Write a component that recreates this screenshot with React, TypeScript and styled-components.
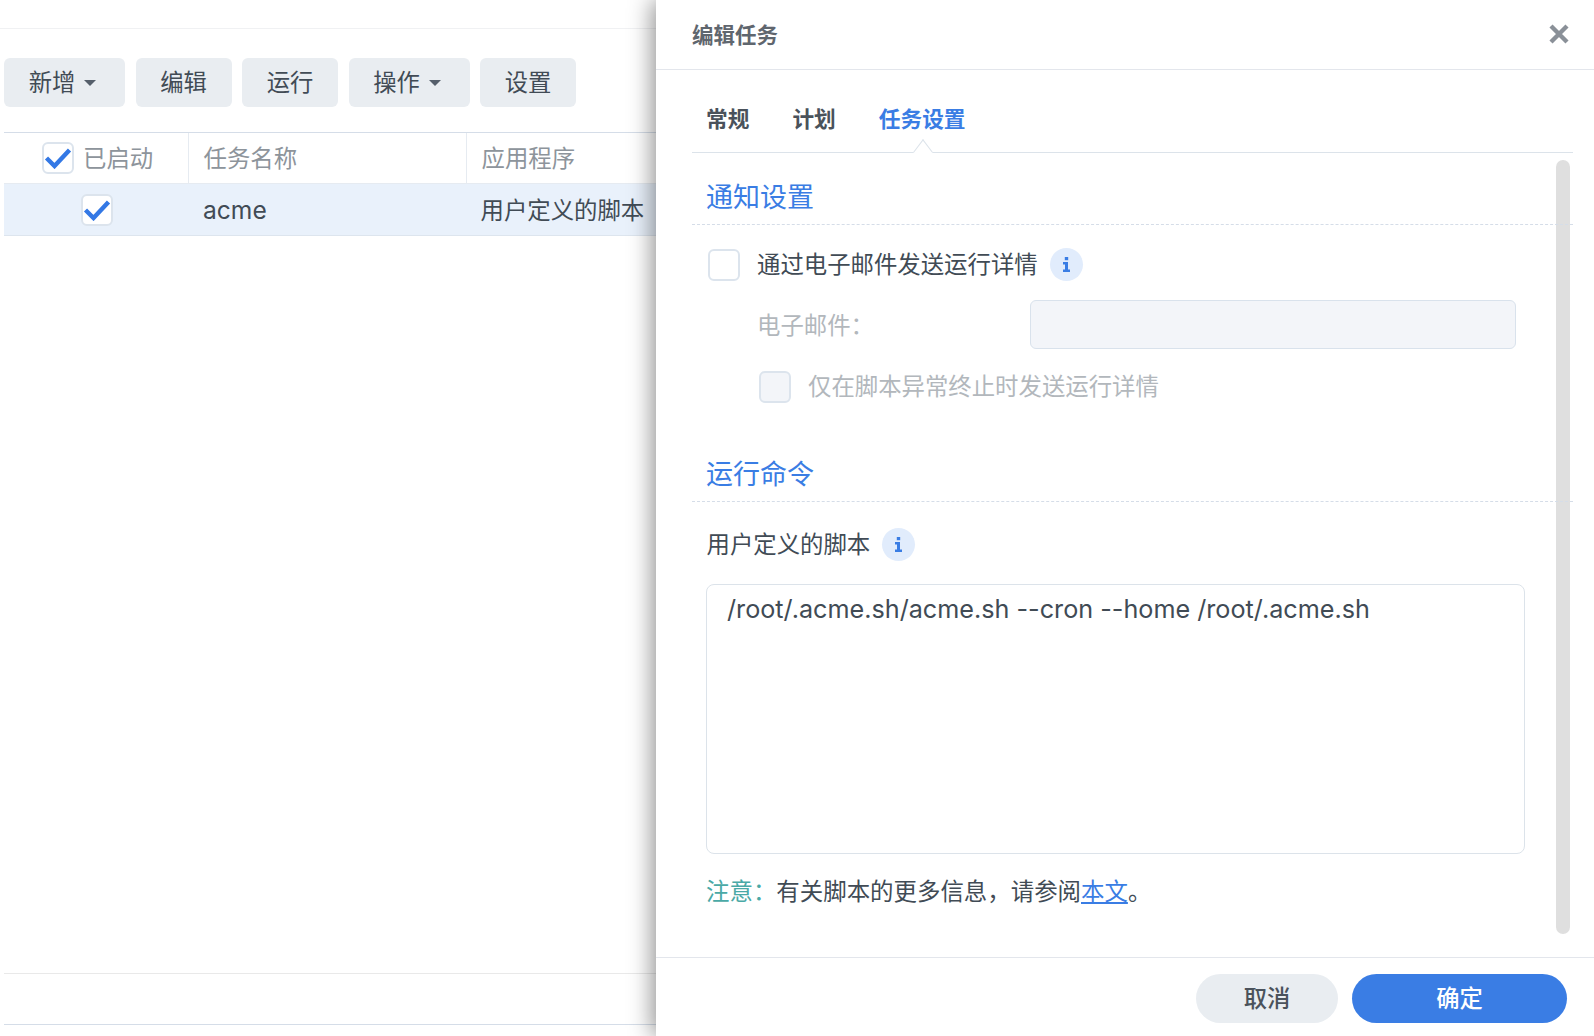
import React from "react";
import styled, { createGlobalStyle } from "styled-components";

const FONT = `"Inter", "Noto Sans CJK SC", sans-serif`;

const Global = createGlobalStyle`
  html, body { margin: 0; padding: 0; background: #fff; }
  body { font-family: ${FONT}; color: #414b55; }
  * { box-sizing: border-box; }
`;

const Page = styled.div`
  position: relative;
  width: 1594px;
  height: 1036px;
  overflow: hidden;
  padding-left: 4px;
  display: flex;
  flex-direction: column;
  background: #fff;
`;
const TopBar = styled.div`
  height: 29px;
  flex: none;
  border-bottom: 1px solid #f0f1f3;
  margin-left: -4px;
`;
const Toolbar = styled.div`
  display: flex;
  gap: 10.5px;
  margin-top: 29px;
  flex: none;
`;
const ToolButton = styled.button<{ $w: number; $menu?: boolean }>`
  width: ${(p) => p.$w}px;
  height: 49px;
  border: 0;
  border-radius: 6px;
  background: #e9edf1;
  color: #414b55;
  font: 400 23.3px/49px ${FONT};
  padding: 0 ${(p) => (p.$menu ? 4 : 0)}px 0 0;
  display: flex;
  align-items: center;
  justify-content: center;
  gap: 9px;
`;
const Caret = styled.i`
  width: 0;
  height: 0;
  border-left: 6px solid transparent;
  border-right: 6px solid transparent;
  border-top: 6px solid #555f6b;
  margin-top: 1px;
`;
const Table = styled.div`
  margin-top: 25px;
  flex: none;
  border-top: 1px solid #d5dde8;
`;
const Row = styled.div<{ $selected?: boolean }>`
  display: grid;
  grid-template-columns: 184px 277.5px 1fr;
  height: ${(p) => (p.$selected ? 52 : 51)}px;
  border-bottom: 1px solid ${(p) => (p.$selected ? "#dde5ee" : "#e6ebf1")};
  background: ${(p) => (p.$selected ? "#e9f1fb" : "#fff")};
`;
const Cell = styled.div<{ $head?: boolean; $sep?: boolean; $pad?: number }>`
  display: flex;
  align-items: center;
  gap: 9px;
  padding-left: ${(p) => p.$pad ?? 15}px;
  font-size: 23.4px;
  white-space: nowrap;
  color: ${(p) => (p.$head ? "#8d949b" : "#414b55")};
  border-left: ${(p) => (p.$sep ? "1px solid #e6ebf1" : "0")};
`;
const CellText = styled.span`
  margin-top: -2px;
`;
const TaskName = styled.span`
  font-size: 24.6px;
`;
const Pager = styled.div`
  margin-top: auto;
  margin-bottom: 11px;
  height: 52px;
  flex: none;
  border-top: 1px solid #e9e9e9;
  border-bottom: 1px solid #d5dde8;
`;

const Drawer = styled.aside`
  position: absolute;
  left: 656px;
  top: 0;
  right: 0;
  bottom: 0;
  background: #fff;
  display: flex;
  flex-direction: column;
  box-shadow: -4px 0 22px rgba(0, 0, 0, 0.42);
`;
const DrawerHead = styled.header`
  height: 70px;
  flex: none;
  display: flex;
  align-items: center;
  justify-content: space-between;
  padding: 0 25px 2px 36px;
  border-bottom: 1px solid #e3e6ec;
  font-size: 21.5px;
  font-weight: 700;
  color: #5f666e;
`;
const Tabs = styled.nav`
  margin: 0 21px 0 36px;
  height: 83px;
  flex: none;
  position: relative;
  display: flex;
  align-items: center;
  gap: 43px;
  padding: 16px 0 0 14px;
  border-bottom: 1px solid #dce3ea;
`;
const Tab = styled.span<{ $active?: boolean }>`
  font-size: 21.7px;
  font-weight: 700;
  line-height: 30px;
  color: ${(p) => (p.$active ? "#3a7de4" : "#4a525b")};
`;
const TabArrow = styled.i`
  position: absolute;
  left: 222.5px;
  bottom: -8px;
  width: 16px;
  height: 16px;
  background: #fff;
  border-top: 1px solid #dce3ea;
  border-left: 1px solid #dce3ea;
  transform: rotate(45deg) skew(8deg, 8deg);
`;
const Body = styled.div`
  flex: 1;
  display: flex;
  flex-direction: column;
  position: relative;
`;
const SectionTitle = styled.h2<{ $top: number }>`
  margin: ${(p) => p.$top}px 21px 0 36px;
  padding: 0 0 8px 14px;
  border-bottom: 1px dashed #d5dde8;
  font-size: 27px;
  font-weight: 400;
  line-height: 36px;
  color: #3a7de4;
  flex: none;
`;
const CheckRow = styled.label<{ $top: number; $indent: number; $gap: number }>`
  display: flex;
  align-items: center;
  gap: ${(p) => p.$gap}px;
  margin: ${(p) => p.$top}px 0 0 ${(p) => p.$indent}px;
  height: 33px;
  font-size: 23.4px;
  white-space: nowrap;
  flex: none;
`;
const RowText = styled.span<{ $muted?: boolean; $offset?: number }>`
  margin: -3px 0 0 ${(p) => p.$offset ?? 5}px;
  color: ${(p) => (p.$muted ? "#b2b7bc" : "inherit")};
`;
const Box = styled.span<{ $disabled?: boolean }>`
  width: 32px;
  height: 32px;
  flex: none;
  position: relative;
  display: block;
  border: 2px solid #dce4ed;
  border-radius: 6px;
  background: ${(p) => (p.$disabled ? "#f3f5f9" : "#fff")};
`;
const CheckMark = styled.svg`
  position: absolute;
  left: 0;
  top: 3px;
  width: 28px;
  height: 22px;
`;
const EmailLabel = styled.span`
  color: #b2b7bc;
  margin-top: -2px;
`;
const InfoDot = styled.span`
  width: 33px;
  height: 33px;
  flex: none;
  border-radius: 50%;
  background: #e1ecfc;
  display: flex;
  align-items: center;
  justify-content: center;
`;
const EmailRow = styled.div`
  display: grid;
  grid-template-columns: 273px 486px;
  align-items: center;
  margin: 19px 0 0 101px;
  height: 49px;
  font-size: 23.4px;
  flex: none;
`;
const EmailInput = styled.input`
  width: 100%;
  height: 49px;
  border: 1px solid #d9e2ec;
  border-radius: 6px;
  background: #f3f5f9;
`;
const Script = styled.textarea`
  display: block;
  flex: none;
  width: 819px;
  height: 270px;
  margin: 23px 0 0 50px;
  padding: 6px 20px;
  border: 1px solid #dce3ea;
  border-radius: 8px;
  resize: none;
  outline: none;
  overflow: hidden;
  font: 400 25.2px/36px ${FONT};
  color: #414b55;
`;
const Note = styled.p`
  margin: 20px 0 0 50px;
  font-size: 23.45px;
  line-height: 36px;
  white-space: nowrap;
  flex: none;
`;
const NoteTag = styled.span`
  color: #4aa9a6;
`;
const NoteLink = styled.a`
  color: #3a7de4;
  text-decoration: underline;
`;
const Scrollbar = styled.i`
  position: absolute;
  left: 900px;
  top: 160px;
  width: 14px;
  height: 774px;
  border-radius: 7px;
  background: #dfdfdf;
`;
const DrawerFoot = styled.footer`
  flex: none;
  height: 79px;
  display: flex;
  justify-content: flex-end;
  gap: 14px;
  padding: 16px 27px 0 0;
  border-top: 1px solid #e3e6ec;
`;
const FootButton = styled.button<{ $primary?: boolean; $w: number }>`
  width: ${(p) => p.$w}px;
  height: 49px;
  border: 0;
  border-radius: 25px;
  padding: 0;
  background: ${(p) => (p.$primary ? "#3a7de4" : "#e9edf1")};
  color: ${(p) => (p.$primary ? "#fff" : "#4a525b")};
  font: 500 23.3px/49px ${FONT};
`;

const Check = () => (
  <CheckMark viewBox="0 0 28 22">
    <path d="M2.5 11 L10.5 19 L25.5 3" fill="none" stroke="#3378e5" strokeWidth="4.4" />
  </CheckMark>
);

const Info = () => (
  <InfoDot>
    <svg width="9" height="15" viewBox="0 0 9 15">
      <rect x="2.8" y="0" width="3.4" height="3.2" fill="#3a7de4" />
      <path d="M1 5h5v7.6h2V15H1v-2.4h2V7.4H1z" fill="#3a7de4" />
    </svg>
  </InfoDot>
);

export default function App() {
  return (
    <>
      <Global />
      <Page>
        <TopBar />
        <Toolbar>
          <ToolButton $w={121} $menu>新增<Caret /></ToolButton>
          <ToolButton $w={96}>编辑</ToolButton>
          <ToolButton $w={96}>运行</ToolButton>
          <ToolButton $w={121} $menu>操作<Caret /></ToolButton>
          <ToolButton $w={96}>设置</ToolButton>
        </Toolbar>
        <Table>
          <Row>
            <Cell $head $pad={38}><Box><Check /></Box><CellText>已启动</CellText></Cell>
            <Cell $head $sep $pad={14.5}><CellText>任务名称</CellText></Cell>
            <Cell $head $sep><CellText>应用程序</CellText></Cell>
          </Row>
          <Row $selected>
            <Cell $pad={77}><Box><Check /></Box></Cell>
            <Cell $pad={15}><TaskName>acme</TaskName></Cell>
            <Cell><CellText>用户定义的脚本</CellText></Cell>
          </Row>
        </Table>
        <Pager />
        <Drawer>
          <DrawerHead>
            编辑任务
            <svg width="20" height="20" viewBox="0 0 20 20">
              <path d="M2 2 L18 18 M18 2 L2 18" stroke="#8a9098" strokeWidth="4.4" fill="none" />
            </svg>
          </DrawerHead>
          <Tabs>
            <Tab>常规</Tab>
            <Tab>计划</Tab>
            <Tab $active>任务设置</Tab>
            <TabArrow />
          </Tabs>
          <Scrollbar />
          <Body>
            <SectionTitle $top={27}>通知设置</SectionTitle>
            <CheckRow $top={23} $indent={52} $gap={12}>
              <Box />
              <RowText>通过电子邮件发送运行详情</RowText>
              <Info />
            </CheckRow>
            <EmailRow>
              <EmailLabel>电子邮件：</EmailLabel>
              <EmailInput disabled />
            </EmailRow>
            <CheckRow $top={21} $indent={103} $gap={12}>
              <Box $disabled />
              <RowText $muted>仅在脚本异常终止时发送运行详情</RowText>
            </CheckRow>
            <SectionTitle $top={54}>运行命令</SectionTitle>
            <CheckRow $top={26} $indent={50.5} $gap={12}>
              <RowText $offset={0}>用户定义的脚本</RowText>
              <Info />
            </CheckRow>
            <Script readOnly defaultValue="/root/.acme.sh/acme.sh --cron --home /root/.acme.sh" />
            <Note>
              <NoteTag>注意：</NoteTag>有关脚本的更多信息，请参阅<NoteLink>本文</NoteLink>。
            </Note>
          </Body>
          <DrawerFoot>
            <FootButton $w={142}>取消</FootButton>
            <FootButton $primary $w={215}>确定</FootButton>
          </DrawerFoot>
        </Drawer>
      </Page>
    </>
  );
}
